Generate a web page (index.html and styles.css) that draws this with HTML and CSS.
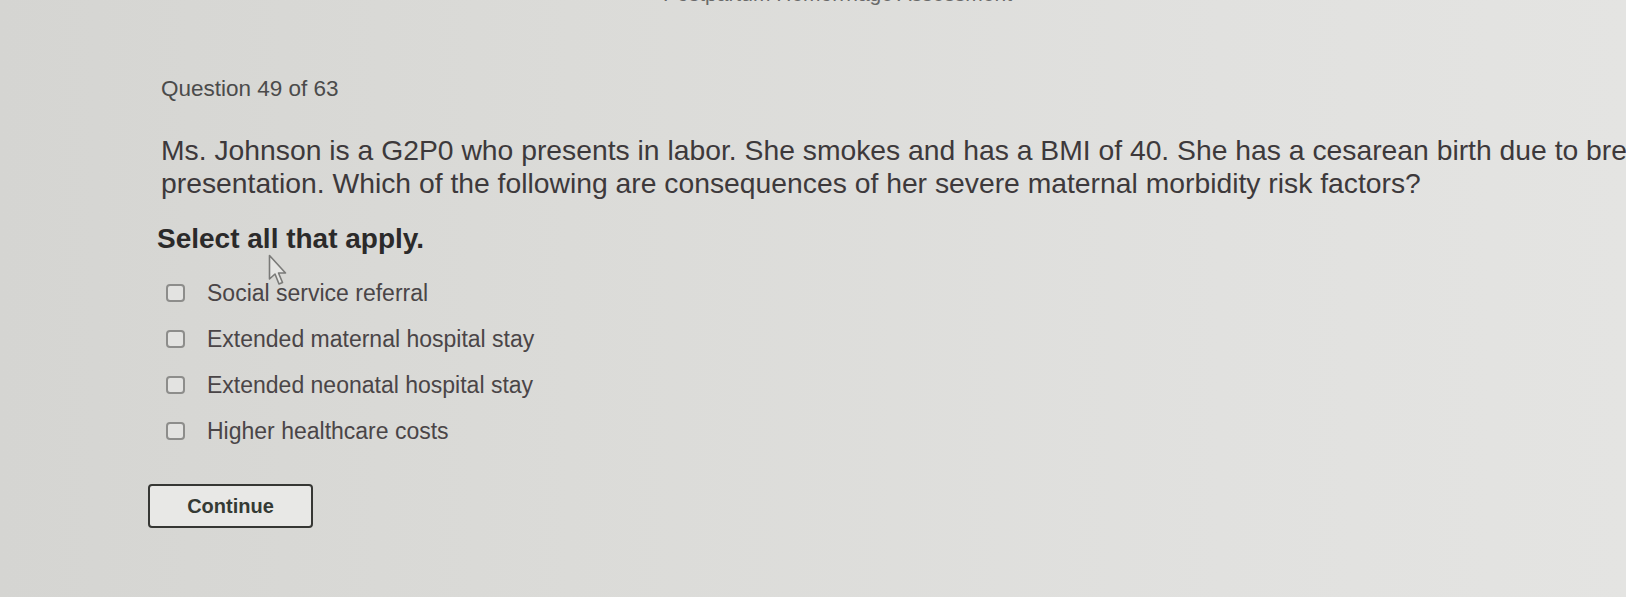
FILE: index.html
```html
<!DOCTYPE html>
<html lang="en">
<head>
<meta charset="utf-8">
<title>Question 49 of 63</title>
<link rel="stylesheet" href="styles.css">
</head>
<body>
<div class="page">
  <div class="top-title">Postpartum Hemorrhage Assessment</div>
  <main class="content">
    <div class="q-count">Question 49 of 63</div>
    <p class="stem">Ms. Johnson is a G2P0 who presents in labor. She smokes and has a BMI of 40. She has a cesarean birth due to breech presentation. Which of the following are consequences of her severe maternal morbidity risk factors?</p>
    <div class="instruction">Select all that apply.</div>
    <ul class="options">
      <li class="option"><span class="box"></span><span class="label">Social service referral</span></li>
      <li class="option"><span class="box"></span><span class="label">Extended maternal hospital stay</span></li>
      <li class="option"><span class="box"></span><span class="label">Extended neonatal hospital stay</span></li>
      <li class="option"><span class="box"></span><span class="label">Higher healthcare costs</span></li>
    </ul>
    <button class="continue" type="button">Continue</button>
  </main>
  <svg class="cursor" width="20" height="32" viewBox="0 0 20 32" aria-hidden="true">
    <path d="M1.5 1.5 L1.5 25 L7 20 L11 30 L14.5 28.5 L10.5 19 L17.5 19 Z" fill="#e6e6e4" stroke="#7a7a78" stroke-width="1.6" stroke-linejoin="round"/>
  </svg>
</div>
</body>
</html>
```

FILE: styles.css
```css
html, body {
  margin: 0;
  padding: 0;
  overflow: hidden;
  height: 100%;
}

body {
  background: linear-gradient(90deg, #d5d5d2 0%, #dbdbd8 35%, #e1e1df 75%, #e4e4e2 100%);
  font-family: "Liberation Sans", Arial, sans-serif;
  color: #3e3a3c;
}

.page {
  position: relative;
  width: 1626px;
  height: 597px;
  overflow: hidden;
}

.top-title {
  margin-top: -18px;
  padding-left: 663px;
  font-size: 21px;
  line-height: 24px;
  color: #6a6a6a;
  white-space: nowrap;
}

.content {
  padding-left: 148px;
}

.q-count {
  margin: 70px 0 0 13px;
  font-size: 22.5px;
  line-height: 26px;
  color: #4b4b4b;
}

.stem {
  margin: 32px 0 0 13px;
  width: 1560px;
  font-size: 28.3px;
  line-height: 33px;
  color: #3d393b;
}

.instruction {
  margin: 22px 0 0 9px;
  font-size: 28px;
  line-height: 33px;
  font-weight: bold;
  color: #2b2a2a;
}

.options {
  list-style: none;
  margin: 15px 0 0 0;
  padding: 0 0 0 18px;
}

.option {
  display: flex;
  align-items: center;
  height: 46px;
}

.box {
  box-sizing: border-box;
  width: 19px;
  height: 18px;
  border: 2px solid #8d8d8b;
  border-radius: 4px;
  background: #e3e3e1;
  flex: none;
}

.label {
  margin-left: 22px;
  font-size: 23px;
  line-height: 26px;
  color: #4a4547;
}

.continue {
  display: block;
  margin-top: 30px;
  box-sizing: border-box;
  width: 165px;
  height: 44px;
  border: 2px solid #363734;
  border-radius: 4px;
  background: #e8e8e6;
  font-family: "Liberation Sans", Arial, sans-serif;
  font-weight: bold;
  font-size: 20px;
  color: #343a34;
  padding: 0;
}

.cursor {
  position: absolute;
  left: 268px;
  top: 254px;
}
```
